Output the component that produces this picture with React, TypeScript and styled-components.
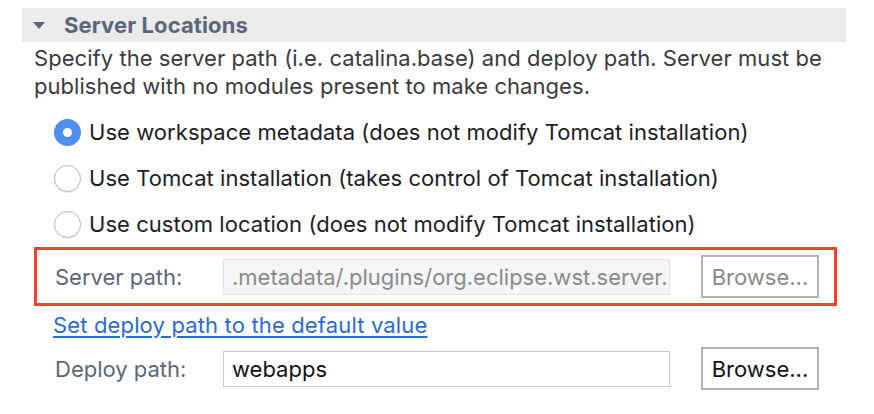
import styled, { createGlobalStyle } from "styled-components";

const GlobalStyle = createGlobalStyle`
  html, body {
    margin: 0;
    padding: 0;
    background: #ffffff;
  }
  body {
    font-family: "Inter", "Liberation Sans", sans-serif;
    color: #1d1d1f;
  }
`;

const radios = [
  { label: "Use workspace metadata (does not modify Tomcat installation)", checked: true },
  { label: "Use Tomcat installation (takes control of Tomcat installation)", checked: false },
  { label: "Use custom location (does not modify Tomcat installation)", checked: false },
];

const App = () => {
  return (
    <>
      <GlobalStyle />
      <Page>
        <SectionHeader>
          <Caret />
          <span>Server Locations</span>
        </SectionHeader>
        <Description>
          Specify the server path (i.e. catalina.base) and deploy path. Server must be
          published with no modules present to make changes.
        </Description>
        <RadioList>
          {radios.map((r) => (
            <RadioRow key={r.label}>
              <RadioDot $checked={r.checked} />
              {r.label}
            </RadioRow>
          ))}
        </RadioList>
        <Highlight>
          <FieldRow>
            <Label>Server path:</Label>
            <PathInput $disabled>.metadata/.plugins/org.eclipse.wst.server.</PathInput>
            <BrowseButton $disabled>Browse...</BrowseButton>
          </FieldRow>
        </Highlight>
        <LinkText>Set deploy path to the default value</LinkText>
        <PlainRow>
          <FieldRow>
            <Label>Deploy path:</Label>
            <PathInput>webapps</PathInput>
            <BrowseButton>Browse...</BrowseButton>
          </FieldRow>
        </PlainRow>
      </Page>
    </>
  );
};

export default App;

const Page = styled.div`
  width: 874px;
  height: 414px;
  overflow: hidden;
  padding-top: 8px;
  box-sizing: border-box;
`;

const SectionHeader = styled.div`
  margin-left: 22px;
  width: 824px;
  height: 34px;
  background-color: #ebebeb;
  display: flex;
  align-items: center;
  gap: 19px;
  padding-left: 11px;
  box-sizing: border-box;

  > span {
    font-size: 22px;
    font-weight: 700;
    color: #5a6679;
    letter-spacing: 0.1px;
  }
`;

// disclosure triangle
const Caret = styled.div`
  width: 0;
  height: 0;
  border-left: 6.5px solid transparent;
  border-right: 6.5px solid transparent;
  border-top: 7px solid #5a6679;
  margin-top: 1px;
`;

const Description = styled.p`
  margin: 2px 0 0 34px;
  width: 810px;
  font-size: 22px;
  letter-spacing: 0.05px;
  line-height: 28px;
  color: #3a3a3c;
`;

const RadioList = styled.div`
  display: flex;
  flex-direction: column;
  gap: 18px;
  margin: 18px 0 0 54px;
`;

const RadioRow = styled.div`
  display: flex;
  align-items: center;
  gap: 8px;
  height: 28px;
  font-size: 22px;
  letter-spacing: 0.05px;
  color: #1d1d1f;
`;

const RadioDot = styled.span<{ $checked?: boolean }>`
  width: 27px;
  height: 27px;
  border-radius: 50%;
  box-sizing: border-box;
  flex: none;
  position: relative;
  background: ${(p) => (p.$checked ? "#4f8ef2" : "#ffffff")};
  border: ${(p) => (p.$checked ? "none" : "1px solid #b9b9b9")};
  box-shadow: ${(p) => (p.$checked ? "none" : "0 1px 1px rgba(0,0,0,0.08)")};

  &::after {
    content: "";
    display: ${(p) => (p.$checked ? "block" : "none")};
    position: absolute;
    left: 50%;
    top: 50%;
    width: 9px;
    height: 9px;
    margin: -4.5px 0 0 -4.5px;
    border-radius: 50%;
    background: #ffffff;
  }
`;

const Highlight = styled.div`
  margin: 9px 0 0 34px;
  width: 803px;
  height: 59px;
  border: 3px solid #e8452c;
  box-sizing: border-box;
  display: flex;
  align-items: center;
`;

const PlainRow = styled.div`
  margin: 1px 0 0 34px;
  width: 803px;
  height: 59px;
  box-sizing: border-box;
  border: 3px solid transparent;
  display: flex;
  align-items: center;
`;

const FieldRow = styled.div`
  display: flex;
  align-items: center;
`;

const Label = styled.div`
  width: 168px;
  padding-left: 18px;
  font-size: 22px;
  color: #5a6679;
`;

const PathInput = styled.div<{ $disabled?: boolean }>`
  width: 447px;
  height: 36px;
  box-sizing: border-box;
  padding-left: 8px;
  display: flex;
  align-items: center;
  font-size: 22px;
  white-space: nowrap;
  overflow: hidden;
  background: ${(p) => (p.$disabled ? "#f5f5f5" : "#ffffff")};
  border: 1px solid ${(p) => (p.$disabled ? "#e3e3e3" : "#c9c9c9")};
  color: ${(p) => (p.$disabled ? "#8a8a8a" : "#111111")};
`;

const BrowseButton = styled.div<{ $disabled?: boolean }>`
  margin-left: 31px;
  width: 118px;
  height: 43px;
  box-sizing: border-box;
  border: 2px solid #b3b3b3;
  background: #ffffff;
  display: flex;
  align-items: center;
  justify-content: center;
  font-size: 22px;
  color: ${(p) => (p.$disabled ? "#8a8a8a" : "#111111")};
`;

const LinkText = styled.a`
  display: block;
  margin: 6px 0 0 53px;
  font-size: 22px;
  letter-spacing: 0.15px;
  line-height: 26px;
  color: #2b6bd6;
  text-decoration: underline;
  text-underline-offset: 3px;
  cursor: pointer;
`;
